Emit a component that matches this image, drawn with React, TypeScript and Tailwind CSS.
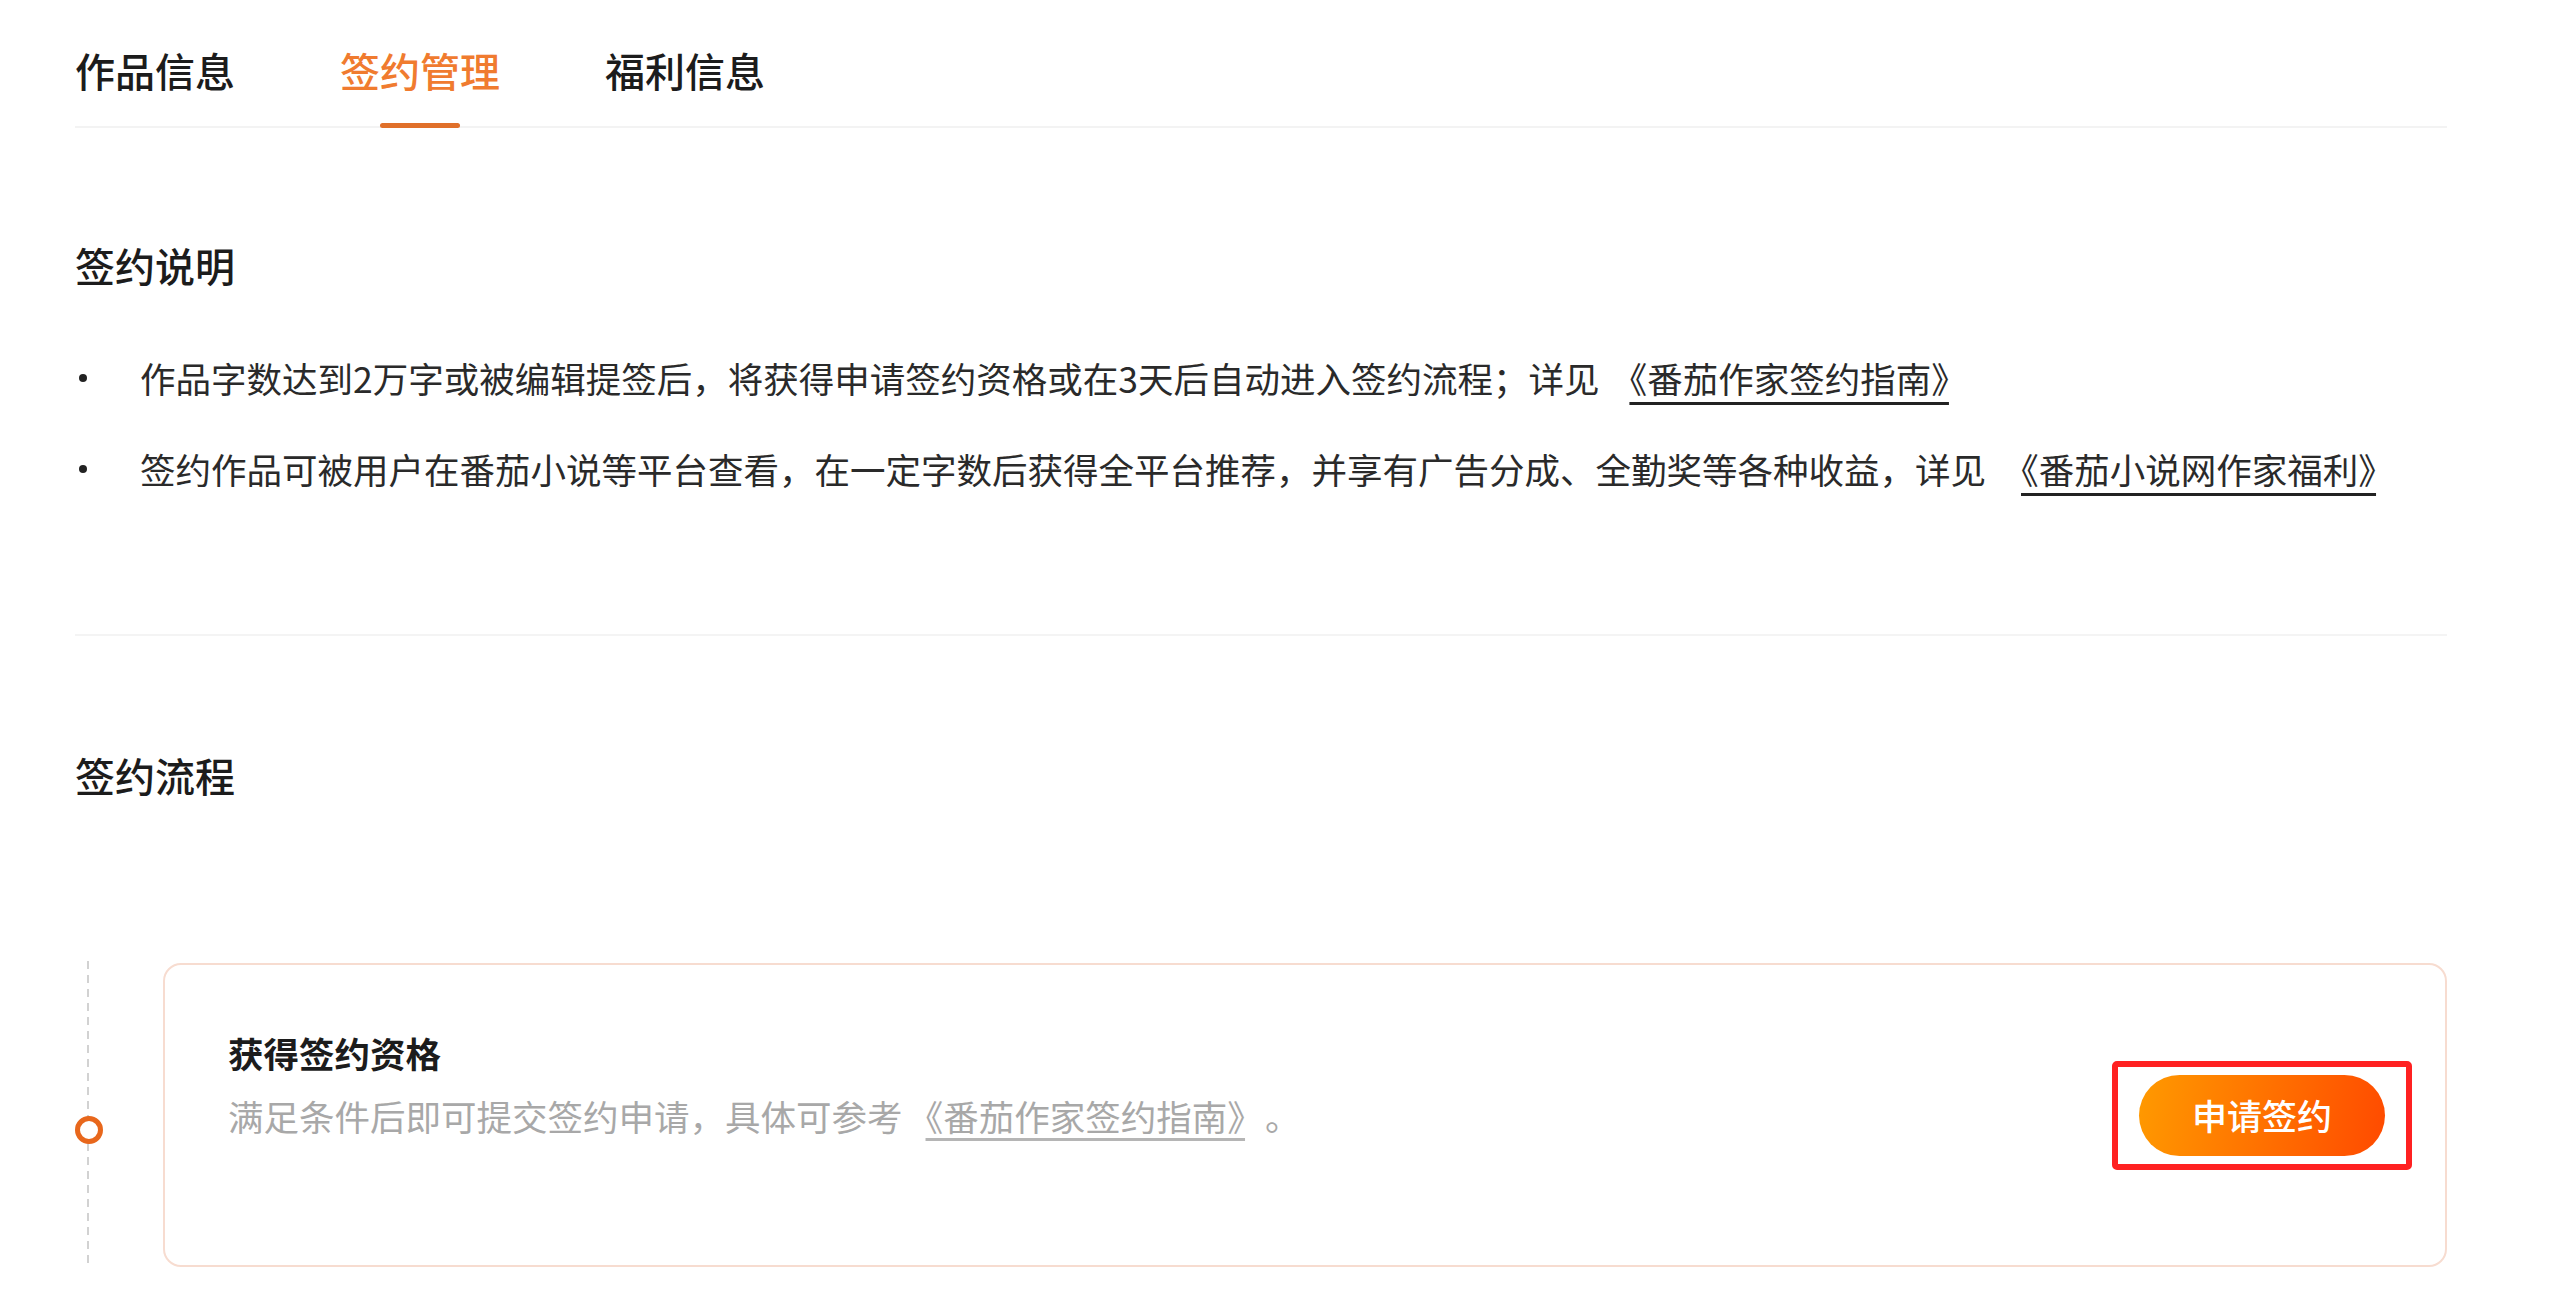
import React from "react";

const tabs = [
  { label: "作品信息", active: false },
  { label: "签约管理", active: true },
  { label: "福利信息", active: false },
];

export default function App() {
  return (
    <div className="min-h-screen bg-white font-['Noto_Sans_CJK_SC','Noto_Sans',sans-serif] text-[#222]">
      <div className="ml-[75px] w-[2372px]">
        {/* Tabs */}
        <div className="flex gap-[105px] border-b-2 border-[#f3f3f3]">
          {tabs.map((t) => (
            <div
              key={t.label}
              className={
                t.active
                  ? "relative pt-[50px] pb-[36px] text-[40px] leading-[40px] font-medium text-[#f07b2f]"
                  : "relative pt-[50px] pb-[36px] text-[40px] leading-[40px] font-medium text-[#1c1c1c]"
              }
            >
              {t.label}
              {t.active && (
                <div className="absolute left-1/2 -translate-x-1/2 -bottom-[2px] h-[5px] w-[80px] rounded-full bg-[#e0702a]" />
              )}
            </div>
          ))}
        </div>

        {/* 签约说明 */}
        <h2 className="mt-[117px] text-[40px] leading-[40px] font-medium text-[#1c1c1c]">签约说明</h2>
        <ul className="mt-[75px] flex flex-col gap-[55px] text-[35.5px] leading-[36px] text-[#2a2a2a]">
          <li className="flex items-center">
            <span className="w-[65px] flex-none">
              <span className="ml-[4px] block h-[8px] w-[8px] rounded-full bg-[#222]" />
            </span>
            <span className="whitespace-nowrap">
              作品字数达到2万字或被编辑提签后，将获得申请签约资格或在3天后自动进入签约流程；详见
              <a className="ml-[30px] pr-[6px] underline decoration-[3px] underline-offset-[9px] decoration-[#222] [font-feature-settings:'halt']">《番茄作家签约指南》</a>
            </span>
          </li>
          <li className="flex items-center">
            <span className="w-[65px] flex-none">
              <span className="ml-[4px] block h-[8px] w-[8px] rounded-full bg-[#222]" />
            </span>
            <span className="whitespace-nowrap">
              签约作品可被用户在番茄小说等平台查看，在一定字数后获得全平台推荐，并享有广告分成、全勤奖等各种收益，详见
              <a className="ml-[35px] underline decoration-[3px] underline-offset-[9px] decoration-[#222] [font-feature-settings:'halt']">《番茄小说网作家福利》</a>
            </span>
          </li>
        </ul>

        <div className="mt-[147px] h-[2px] bg-[#f4f4f4]" />

        {/* 签约流程 */}
        <h2 className="mt-[119px] text-[40px] leading-[40px] font-medium text-[#1c1c1c]">签约流程</h2>

        <div className="mt-[166px] flex pb-[200px]">
          <div className="relative w-[88px] flex-none">
            <div className="absolute left-[12px] top-0 bottom-0 w-[2px] bg-[linear-gradient(#d2d2d2_57%,transparent_57%)] bg-[length:2px_14px] bg-repeat-y" />
            <div className="absolute left-0 top-[155px] h-[28px] w-[28px] rounded-full border-[5px] border-[#e8671c] bg-white" />
          </div>
          <div className="mt-[2px] flex h-[304px] flex-1 justify-between rounded-[18px] border-2 border-[#f7dcd0] bg-white">
            <div className="pt-[70px] pl-[63px]">
              <div className="text-[35.5px] leading-[36px] font-bold text-[#1c1c1c]">获得签约资格</div>
              <div className="mt-[27px] whitespace-nowrap text-[35.5px] leading-[36px] text-[#a8a8a8]">
                满足条件后即可提交签约申请，具体可参考
                <a className="ml-[23px] underline decoration-[3px] underline-offset-[7px] decoration-[#b5b5b5] [font-feature-settings:'halt']">《番茄作家签约指南》</a>
                <span className="ml-[20px]">。</span>
              </div>
            </div>
            <div className="mr-[33px] self-center rounded-[5px] border-[6px] border-[#ff2121] px-[21px] py-[8px]">
              <button className="flex h-[81px] w-[246px] items-center justify-center rounded-full bg-[linear-gradient(100deg,#ff9a00,#ff4a00)] text-[35px] font-medium leading-[36px] text-white">
                申请签约
              </button>
            </div>
          </div>
        </div>
      </div>
    </div>
  );
}
